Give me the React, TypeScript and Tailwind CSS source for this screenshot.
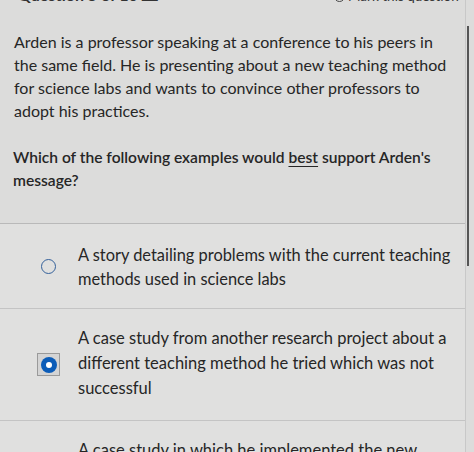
import React from "react";

function Radio({ selected }: { selected?: boolean }) {
  if (selected) {
    return (
      <div className="w-[23px] h-[23px] shrink-0 border border-[#9a9a9a] bg-[#d4d4d4] flex items-center justify-center">
        <div className="w-[16px] h-[16px] rounded-full bg-[#0b5cb8] flex items-center justify-center">
          <div className="w-[6px] h-[6px] rounded-full bg-white" />
        </div>
      </div>
    );
  }
  return (
    <div className="w-[22px] h-[22px] shrink-0 flex items-center justify-center">
      <div className="w-[15px] h-[15px] rounded-full border-[1.5px] border-[#34609a]" />
    </div>
  );
}

export default function App() {
  return (
    <div
      className="w-[474px] h-[452px] overflow-hidden bg-[#dcdcdb] text-[#262626] relative"
      style={{ fontFamily: "Lato, 'Open Sans', sans-serif" }}
    >
      <div className="flex h-full">
        <div className="w-[466px] flex flex-col border-r border-[#c8c8c8]">
          <div className="h-[6px] relative">
            <div className="absolute -top-[13px] left-[18px] whitespace-nowrap text-[16px] leading-[16px] font-bold text-[#333]">
              Question 5 of 10 ▬
            </div>
            <div className="absolute -top-[11px] left-[334px] flex items-center gap-[3px] whitespace-nowrap text-[13.5px] leading-[15px] text-[#333]">
              <span className="w-[11px] h-[11px] rounded-full border-[1.5px] border-[#444] inline-block" />
              <span>Mark this question</span>
            </div>
          </div>
          <div className="pl-[14px] pr-[10px] pt-[30px] text-[16px] leading-[23px]">
            <p>
              Arden is a professor speaking at a conference to his peers in the same field. He is presenting about a new
              teaching method for science labs and wants to convince other professors to adopt his practices.
            </p>
            <p className="mt-[24px] font-semibold text-[15.6px] -ml-[1px]">
              Which of the following examples would <span className="underline underline-offset-[3px]">best</span> support
              Arden's message?
            </p>
          </div>
          <div className="mt-[31px] border-t border-[#b9b9b9] bg-[#e0e0df] flex-1 flex flex-col">
            <div className="flex items-center h-[84px] pl-[37px] pr-[6px]">
              <Radio />
              <div className="ml-[19px] text-[16.4px] leading-[24px] pt-[1px]">
                A story detailing problems with the current teaching methods used in science labs
              </div>
            </div>
            <div className="border-t border-[#c4c4c4] flex items-center h-[112px] pl-[37px] pr-[6px]">
              <Radio selected />
              <div className="ml-[18px] text-[16.5px] leading-[25px] -mt-[2px]">
                A case study from another research project about a different teaching method he tried which was not
                successful
              </div>
            </div>
            <div className="border-t border-[#c4c4c4] pl-[78px] pr-[6px] pt-[17px] text-[16.5px] leading-[25px] whitespace-nowrap">
              A case study in which he implemented the new
            </div>
          </div>
        </div>
        <div className="w-[8px] relative">
          <div className="absolute left-[1px] top-[26px] w-[2px] h-[240px] bg-[#555]" />
        </div>
      </div>
    </div>
  );
}
